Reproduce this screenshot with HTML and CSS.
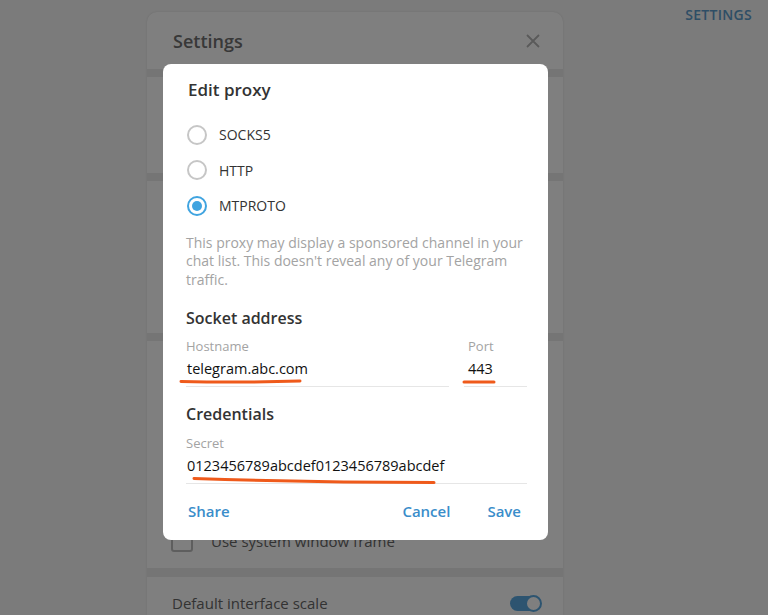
FILE: index.html
```html
<!DOCTYPE html>
<html lang="en">
<head>
<meta charset="utf-8">
<title>Edit proxy</title>
<link rel="stylesheet" href="styles.css">
</head>
<body>
<div class="app">
  <div class="left-space"></div>
  <div class="panel">
    <div class="panel-head">
      <span class="panel-title">Settings</span>
      <svg class="close" width="14" height="14" viewBox="0 0 14 14"><path d="M1 1L13 13M13 1L1 13" stroke="#b4b4b4" stroke-width="1.8" fill="none"/></svg>
    </div>
    <div class="band"></div>
    <div class="section s1"></div>
    <div class="band"></div>
    <div class="section s2"></div>
    <div class="band"></div>
    <div class="section s3">
      <div class="check-row"><span class="checkbox"></span><span class="row-text">Use system window frame</span></div>
    </div>
    <div class="band b-last"></div>
    <div class="section s4">
      <div class="toggle-row"><span class="row-text">Default interface scale</span><span class="toggle"><span class="knob"></span></span></div>
    </div>
  </div>
  <div class="right-col"><span class="top-link">SETTINGS</span></div>

  <div class="overlay"></div>

  <div class="dialog">
    <h2 class="dlg-title">Edit proxy</h2>
    <div class="radios">
      <div class="radio"><span class="ring"></span><span>SOCKS5</span></div>
      <div class="radio"><span class="ring"></span><span>HTTP</span></div>
      <div class="radio"><span class="ring on"><span class="dot"></span></span><span>MTPROTO</span></div>
    </div>
    <p class="note">This proxy may display a sponsored channel in your chat list. This doesn't reveal any of your Telegram traffic.</p>
    <h3 class="sub">Socket address</h3>
    <div class="fields">
      <div class="field host"><div class="flabel">Hostname</div><div class="fvalue">telegram.abc.com</div></div>
      <div class="field port"><div class="flabel">Port</div><div class="fvalue">443</div></div>
    </div>
    <h3 class="sub cred">Credentials</h3>
    <div class="field secret"><div class="flabel">Secret</div><div class="fvalue">0123456789abcdef0123456789abcdef</div></div>
    <div class="actions">
      <span class="btn share">Share</span>
      <span class="btn cancel">Cancel</span>
      <span class="btn save">Save</span>
    </div>
    <svg class="marks" width="385" height="476" viewBox="0 0 385 476">
      <g stroke="#ef5a1b" stroke-width="3" stroke-linecap="round" fill="none">
        <path d="M18 317.5 Q 80 318.8 137 317"/>
        <path d="M301 318 L331 318"/>
        <path d="M31 414.5 Q 150 418.5 271 418.5"/>
      </g>
    </svg>
  </div>
</div>
</body>
</html>
```

FILE: styles.css
```css
* { box-sizing: border-box; }
html, body { margin: 0; padding: 0; }
body {
  width: 768px;
  height: 615px;
  overflow: hidden;
  font-family: "Open Sans", "DejaVu Sans", sans-serif;
  background: #f6f6f6;
}
.app {
  position: relative;
  display: flex;
  width: 768px;
  height: 615px;
  overflow: hidden;
}
.left-space { width: 147px; flex: none; }
.panel {
  width: 416px;
  flex: none;
  margin-top: 12px;
  background: #ffffff;
  border-radius: 10px 10px 0 0;
  box-shadow: 0 0 2px rgba(0,0,0,0.12);
  display: flex;
  flex-direction: column;
}
.panel > * { flex: none; }
.panel-head {
  height: 57px;
  display: flex;
  align-items: center;
  justify-content: space-between;
  padding: 0 23px 0 26px;
}
.panel-title {
  font-size: 18px;
  font-weight: 600;
  color: #707070;
}
.band { height: 8px; background: #eaeaea; }
.b-last { height: 9px; }
.s1 { height: 96px; }
.s2 { height: 152px; }
.s3 {
  height: 227px;
  display: flex;
  flex-direction: column;
  justify-content: flex-end;
  padding: 0 0 16px 24px;
}
.check-row {
  display: flex;
  align-items: center;
  height: 22px;
  gap: 18px;
}
.checkbox {
  width: 22px;
  height: 22px;
  border: 2px solid #bdbdbd;
  border-radius: 3px;
}
.row-text { font-size: 15px; color: #666; }
.s4 { height: 52px; padding: 0 22px 0 25px; }
.toggle-row {
  height: 52px;
  display: flex;
  align-items: center;
  justify-content: space-between;
}
.toggle {
  width: 31px;
  height: 15px;
  border-radius: 8px;
  background: #5aa9e0;
  display: flex;
  align-items: center;
  justify-content: flex-end;
}
.knob {
  width: 17px;
  height: 17px;
  margin-right: -1px;
  border-radius: 50%;
  background: #fff;
  border: 2px solid #5aa9e0;
}
.right-col {
  flex: 1;
  text-align: right;
  padding: 3px 16px 0 0;
}
.top-link {
  font-size: 14px;
  font-weight: 600;
  line-height: 20px;
  color: #5d9ccc;
  letter-spacing: 0.3px;
}
.overlay {
  position: absolute;
  inset: 0;
  background: rgba(0,0,0,0.5);
}

/* dialog */
.dialog {
  position: absolute;
  left: 163px;
  top: 64px;
  width: 385px;
  height: 476px;
  background: #fff;
  border-radius: 8px;
  padding: 14px 21px 0 23px;
  color: #222;
}
.dlg-title {
  margin: 0 0 0 2px;
  font-size: 17px;
  font-weight: 600;
  line-height: 24px;
  color: #333;
}
.radios { margin-top: 15px; }
.radio {
  height: 35.5px;
  display: flex;
  align-items: center;
  gap: 12px;
  font-size: 14px;
  color: #333;
}
.ring {
  width: 20px;
  height: 20px;
  margin-left: 1px;
  border: 2px solid #c6c6c6;
  border-radius: 50%;
  display: flex;
  align-items: center;
  justify-content: center;
}
.ring.on { border-color: #40a4e0; }
.dot {
  width: 10px;
  height: 10px;
  border-radius: 50%;
  background: #40a4e0;
}
.note {
  margin: 10px 0 0;
  font-size: 14px;
  line-height: 18.5px;
  color: #a3a3a3;
}
.sub {
  margin: 18px 0 0;
  font-size: 16px;
  font-weight: 600;
  line-height: 22px;
  color: #333;
}
.fields {
  display: flex;
  gap: 15px;
  margin-top: 8px;
}
.host { width: 263px; }
.port { width: 63px; }
.port .flabel, .port .fvalue { padding-left: 4px; }
.flabel {
  font-size: 13px;
  line-height: 18px;
  color: #a3a3a3;
}
.fvalue {
  margin-top: 4px;
  font-size: 14.5px;
  line-height: 20px;
  color: #111;
  padding: 0 0 7px 1px;
  border-bottom: 1px solid #e6e6e6;
}
.sub.cred { margin-top: 16px; }
.secret { margin-top: 9px; }
.actions {
  display: flex;
  margin-top: 17px;
  padding: 0 6px 0 2px;
}
.btn {
  font-size: 15px;
  font-weight: 600;
  line-height: 20px;
  color: #3a8dca;
}
.share { margin-right: auto; }
.save { margin-left: 37px; }
.marks {
  position: absolute;
  left: 0;
  top: 0;
  pointer-events: none;
}
```
